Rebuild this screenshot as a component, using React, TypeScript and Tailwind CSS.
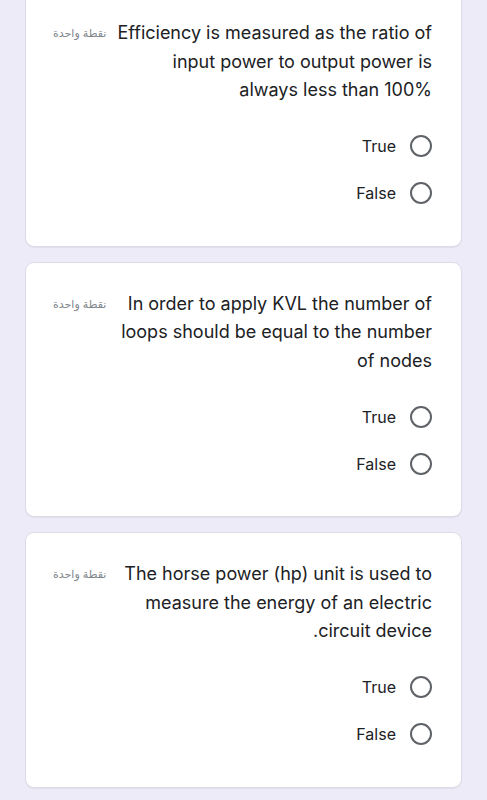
const questions = [
  {
    lines: [
      "Efficiency is measured as the ratio of",
      "input power to output power is",
      "always less than 100%",
    ],
  },
  {
    lines: [
      "In order to apply KVL the number of",
      "loops should be equal to the number",
      "of nodes",
    ],
  },
  {
    lines: [
      "The horse power (hp) unit is used to",
      "measure the energy of an electric",
      "circuit device.",
    ],
  },
];

const Radio = ({ label }: { label: string }) => (
  <div className="flex h-[47px] items-center gap-[14px]">
    <span className="h-[22px] w-[22px] rounded-full border-2 border-[#5f6368]" />
    <span className="text-[16px] text-[#202124]">{label}</span>
  </div>
);

const QuestionCard = ({ lines }: { lines: string[] }) => (
  <div
    dir="rtl"
    className="rounded-[9px] border border-[#dedbe8] bg-white pb-[29px] pl-[27px] pr-[29px] pt-[27px] shadow-[0_1px_1px_rgba(0,0,0,0.06)]"
  >
    <div className="flex items-start gap-[10px]">
      <div className="flex-1 text-[18px] leading-[28.5px] text-[#202124]">
        {lines.map((l, i) => (
          <div key={i} className="whitespace-nowrap">
            {l}
          </div>
        ))}
      </div>
      <div className="pt-[6px] text-[11px] leading-[16px] text-[#80868b]">
        نقطة واحدة
      </div>
    </div>
    <div className="mt-[18px] flex flex-col">
      <Radio label="True" />
      <Radio label="False" />
    </div>
  </div>
);

export default function App() {
  return (
    <div
      className="min-h-[800px] overflow-hidden bg-[#eeebf8] px-[25px]"
      style={{ fontFamily: "Inter, 'DejaVu Sans', sans-serif" }}
    >
      <div className="-mt-[9px] flex flex-col gap-[15px] pb-6">
        {questions.map((q, i) => (
          <QuestionCard key={i} lines={q.lines} />
        ))}
      </div>
    </div>
  );
}
